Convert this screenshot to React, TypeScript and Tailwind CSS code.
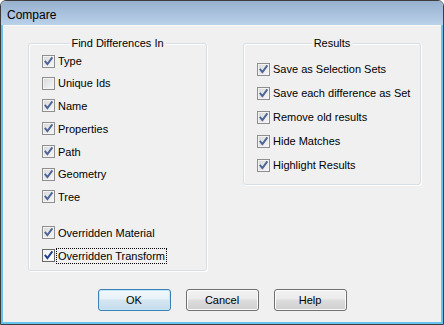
import React from "react";

const font = { fontFamily: '"Liberation Sans", Arial, sans-serif' };

function Check({ checked, focused }: { checked: boolean; focused?: boolean }) {
  return (
    <span
      className={`relative flex h-[13px] w-[13px] shrink-0 items-center justify-center border ${
        focused ? "border-[#6a6a6a] bg-gradient-to-br from-[#eef0f3] to-white" : "border-[#8f8f8f] bg-gradient-to-br from-[#d6d8db] to-[#f8f8f8]"
      } shadow-[inset_0_0_0_1px_#f3f3f3]`}
    >
      {checked && (
        <svg width="11" height="11" viewBox="0 0 11 11" className="absolute left-[0px] top-[0px]">
          <path
            d="M2.4 5.6 L4.4 8.1 L8.8 2.2"
            fill="none"
            stroke={focused ? "#1e3f8c" : "#4f6597"}
            strokeWidth="1.9"
            strokeLinecap="square"
            strokeLinejoin="miter"
          />
        </svg>
      )}
    </span>
  );
}

function Row({
  label,
  checked = true,
  focused,
  h,
}: {
  label: string;
  checked?: boolean;
  focused?: boolean;
  h: string;
}) {
  return (
    <div className={`flex items-center pl-[13px] ${h}`}>
      <Check checked={checked} focused={focused} />
      <span
        className={`ml-[2px] px-[1px] text-[11px] leading-[14px] text-black ${
          focused ? "outline-1 outline-dotted outline-black" : ""
        }`}
      >
        {label}
      </span>
    </div>
  );
}

function Group({ title, className, children }: { title: string; className: string; children: React.ReactNode }) {
  return (
    <div
      className={`relative rounded-[3px] border border-[#d5dfe5] shadow-[inset_1px_1px_0_#fff,1px_1px_0_#fff] ${className}`}
    >
      <span className="absolute left-1/2 top-[-8px] -translate-x-1/2 bg-[#f0f0f0] px-[2px] text-[11px] leading-[14px] text-black whitespace-nowrap">
        {title}
      </span>
      {children}
    </div>
  );
}

function Button({ label, primary }: { label: string; primary?: boolean }) {
  return (
    <button
      className={`h-[22px] w-[73px] rounded-[3px] border text-[11px] text-black ${
        primary
          ? "border-[#3c7fb1] bg-[linear-gradient(#f2f8fb_0%,#e6f1f8_45%,#d3e5f1_50%,#c6dcec_100%)] shadow-[inset_0_0_0_1px_#bfe8fb]"
          : "border-[#707070] bg-[linear-gradient(#f2f2f2_0%,#ebebeb_45%,#dddddd_50%,#cfcfcf_100%)] shadow-[inset_0_0_0_1px_#fcfcfc]"
      }`}
    >
      {label}
    </button>
  );
}

export default function App() {
  return (
    <div className="h-[325px] w-[444px] bg-white" style={font}>
      <div className="flex h-full w-full flex-col overflow-hidden rounded-t-[6px] border border-[#3d3d3d]">
        <div className="flex h-[24px] shrink-0 items-center bg-gradient-to-b from-[#96b0ce] to-[#bad1ea] px-[6px] pt-[3px]">
          <span className="text-[12px] text-black">Compare</span>
        </div>
        <div className="flex flex-1 flex-col border-x-2 border-b-2 border-[#66c3ee] border-t-0">
          <div className="flex-1 bg-[#f0f0f0] shadow-[inset_1px_1px_0_#fafafa]">
            <div className="flex pl-[25px] pt-[18px]">
              <Group title="Find Differences In" className="h-[228px] w-[179px] pt-[6px]">
                <Row label="Type" h="h-[22px]" />
                <Row label="Unique Ids" checked={false} h="h-[22px]" />
                <Row label="Name" h="h-[23px]" />
                <Row label="Properties" h="h-[23px]" />
                <Row label="Path" h="h-[23px]" />
                <Row label="Geometry" h="h-[22px]" />
                <Row label="Tree" h="h-[23px]" />
                <div className="h-[13px]" />
                <Row label="Overridden Material" h="h-[23px]" />
                <Row label="Overridden Transform" focused h="h-[23px]" />
              </Group>
              <Group title="Results" className="ml-[36px] h-[142px] w-[178px] pt-[13px]">
                <Row label="Save as Selection Sets" h="h-[24px]" />
                <Row label="Save each difference as Set" h="h-[24px]" />
                <Row label="Remove old results" h="h-[24px]" />
                <Row label="Hide Matches" h="h-[24px]" />
                <Row label="Highlight Results" h="h-[24px]" />
              </Group>
            </div>
            <div className="mt-[18px] flex justify-center gap-[15px]">
              <Button label="OK" primary />
              <Button label="Cancel" />
              <Button label="Help" />
            </div>
          </div>
        </div>
      </div>
    </div>
  );
}
